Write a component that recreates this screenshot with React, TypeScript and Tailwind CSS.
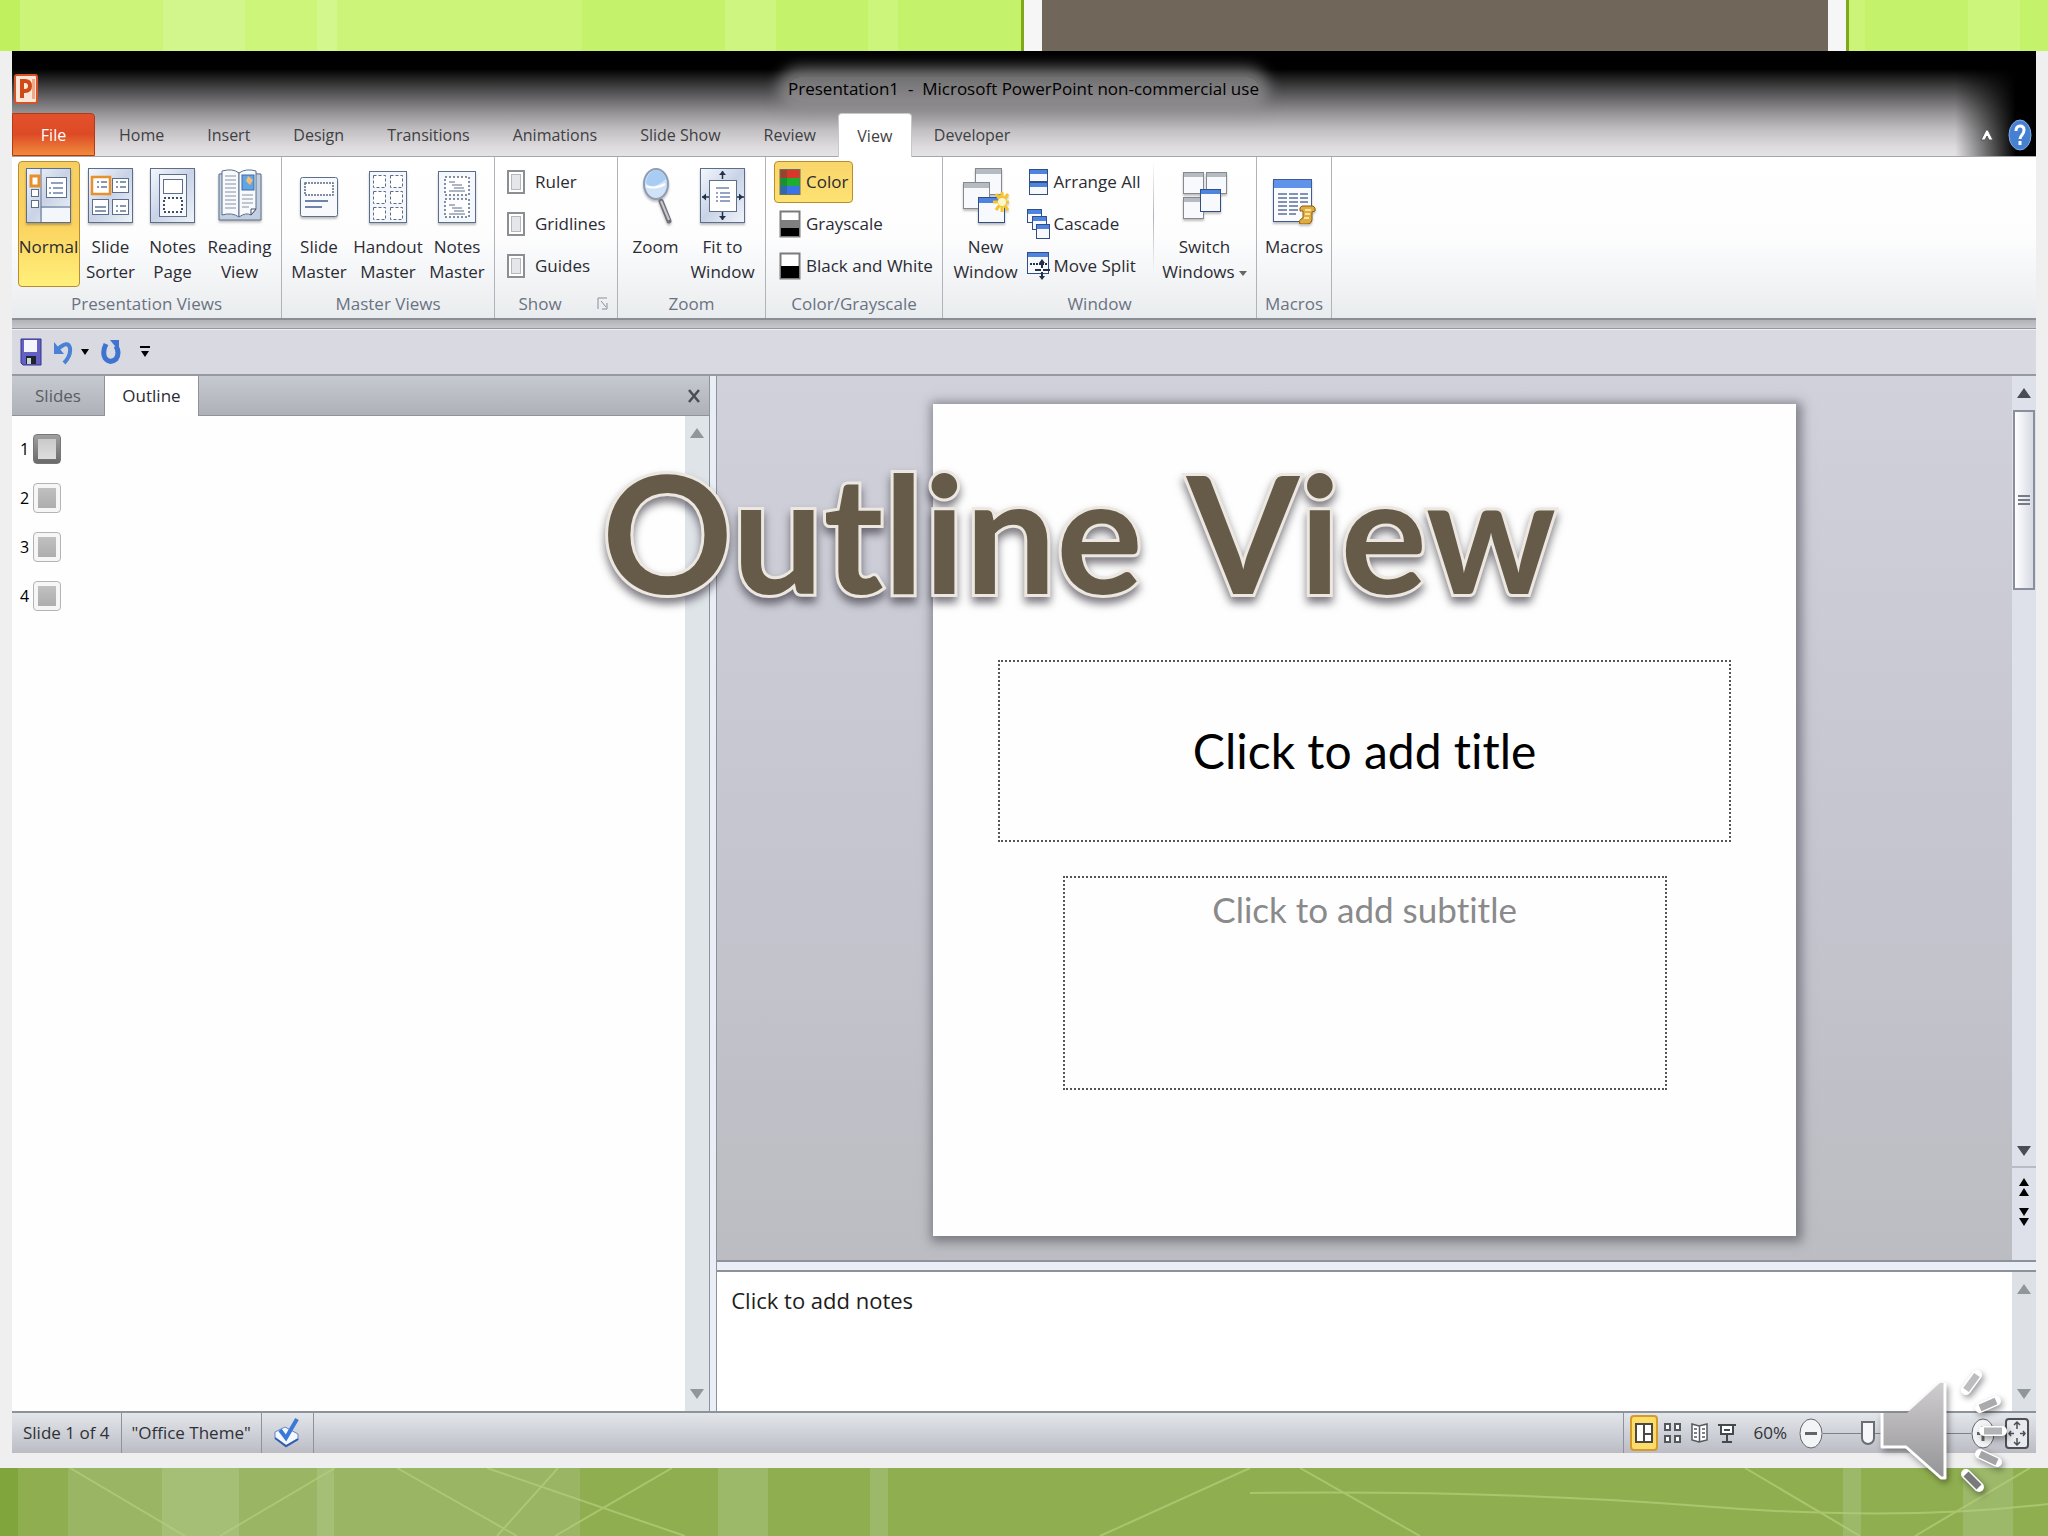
import type { ReactNode } from "react"
import clsx from "clsx"

const LINE = "#5b6f8c"

function Frame({ x, y, w, h, fill = "#fff", stroke = LINE }: { x: number; y: number; w: number; h: number; fill?: string; stroke?: string }) {
  return <rect x={x + 0.5} y={y + 0.5} width={w} height={h} fill={fill} stroke={stroke} />
}

function Dotted({ x, y, w, h }: { x: number; y: number; w: number; h: number }) {
  return <rect x={x} y={y} width={w} height={h} fill="#fff" stroke="#3f4d66" strokeWidth="2" strokeDasharray="2 2" />
}

function BigIcon({ children }: { children: ReactNode }) {
  return (
    <svg width="46" height="56" viewBox="0 0 46 56" fill="none" className="drop-shadow-[0_2px_1px_rgba(0,0,0,0.25)]" aria-hidden="true">
      <defs>
        <linearGradient id="pane" x1="0" y1="0" x2="1" y2="1">
          <stop offset="0" stopColor="#f4f7fc" />
          <stop offset="0.5" stopColor="#c9d3e6" />
          <stop offset="1" stopColor="#f0f4fa" />
        </linearGradient>
      </defs>
      {children}
    </svg>
  )
}

function NormalIcon() {
  return (
    <BigIcon>
      <Frame x={0} y={0} w={44} h={54} fill="url(#pane)" />
      <path d="M15 0v54M15 39h30" stroke={LINE} />
      <path d="M16 40h28v14h-28z" fill="#f3f6fb" />
      <rect x="5" y="8" width="8" height="10" fill="#fff" stroke="#e8902c" strokeWidth="3" />
      <Frame x={5} y={21} w={7} h={7} />
      <Frame x={5} y={32} w={7} h={7} />
      <Frame x={20} y={9} w={20} h={20} />
      <path d="M25 15h12M27 20h10M27 25h10" stroke="#6d83a8" strokeWidth="1.5" />
      <path d="M23 20h2M23 25h2" stroke="#6d83a8" strokeWidth="1.5" />
    </BigIcon>
  )
}

function SorterIcon() {
  return (
    <BigIcon>
      <Frame x={0} y={0} w={44} h={54} fill="url(#pane)" />
      <Frame x={24} y={10} w={16} h={14} />
      <Frame x={4} y={31} w={16} h={15} />
      <Frame x={24} y={31} w={16} h={15} />
      <rect x="4" y="9" width="18" height="17" fill="#fff" stroke="#e8902c" strokeWidth="2.5" />
      <path d="M9 14h2m2 0h6M9 19h2m2 0h6M28 14h2m2 0h6M28 19h2m2 0h6M7 39h11M7 43h11M28 38h2m2 0h6M28 43h2m2 0h6" stroke="#5f7699" strokeWidth="1.5" />
    </BigIcon>
  )
}

function NotesPageIcon() {
  return (
    <BigIcon>
      <Frame x={0} y={0} w={44} h={54} fill="url(#pane)" />
      <Frame x={9} y={6} w={27} h={42} fill="#f6f8fc" />
      <Frame x={13} y={11} w={19} h={14} />
      <Dotted x={14} y={30} w={18} h={14} />
    </BigIcon>
  )
}

function ReadingIcon() {
  return (
    <BigIcon>
      <path d="M2 6L21 5L44 6V52H2Z" fill="#c3cfe0" stroke={LINE} />
      <path d="M5 3Q16 0 22 5V49Q15 44 5 47Z" fill="#f7f9fc" stroke={LINE} />
      <path d="M39 3Q29 0 22 5V49Q29 44 34 47L39 41Z" fill="#f7f9fc" stroke={LINE} />
      <path d="M34 47V41H39Z" fill="#fff" stroke="#3f4d66" />
      <path d="M8 8h11M8 12h11M8 16h11M8 20h11M8 24h11M8 28h11M8 32h11M8 36h11M8 40h11M25 27h11M25 31h11M25 35h11M25 39h7" stroke="#8592a6" />
      <rect x="25" y="7" width="12" height="15" fill="#62a5e6" stroke="#3d6ca5" />
      <path d="M31 8l5 4-3 5-4-4z" fill="#f5bd72" />
    </BigIcon>
  )
}

function SlideMasterIcon() {
  return (
    <BigIcon>
      <rect x="4.5" y="9.5" width="37" height="39" rx="2" fill="#f7f9fc" stroke={LINE} />
      <rect x="9" y="15" width="28" height="12" fill="#fff" stroke="#5c6b86" strokeWidth="1.500" strokeDasharray="2 1" />
      <path d="M9 33h23M9 39h17" stroke="#6d83a8" strokeWidth="2" />
    </BigIcon>
  )
}

function HandoutIcon() {
  return (
    <BigIcon>
      <Frame x={4} y={3} w={37} h={51} fill="#f4f7fb" />
      {[7, 23, 39].map((y) => (
        <path key={y} d={`M8.500 ${y}.5h12v12h-12zM25.500 ${y}.5h12v12h-12z`} fill="#fff" stroke="#5c6b86" strokeDasharray="3 2" />
      ))}
    </BigIcon>
  )
}

function NotesMasterIcon() {
  return (
    <BigIcon>
      <Frame x={4} y={3} w={37} h={51} fill="#f4f7fb" />
      <path d="M11 9h24v18H11zM11 31h24v18H11z" fill="#fff" stroke="#5c6b86" strokeWidth="1.500" strokeDasharray="2 2" />
      <path d="M15 14h6M18 17h10M20 20h10M15 23h16M15 37h6M18 40h10M20 43h10M15 46h16" stroke="#5c6b86" />
    </BigIcon>
  )
}

function ZoomIcon() {
  return (
    <BigIcon>
      <path d="M28 33L36 53" stroke="#6f6f75" strokeWidth="5" strokeLinecap="round" />
      <path d="M28 33L36 52" stroke="#c9c9cf" strokeWidth="2" />
      <ellipse cx="23" cy="16" rx="12" ry="15" fill="#cfe2f7" stroke="#8d9db3" strokeWidth="2" />
      <path d="M13 15q6 8 20-4q-2-8-10-9q-9 2-10 13z" fill="#a9ccf2" />
      <path d="M13 18q8 4 19-2" stroke="#fff" strokeWidth="2" />
    </BigIcon>
  )
}

function FitIcon() {
  return (
    <BigIcon>
      <Frame x={0} y={0} w={44} h={54} fill="url(#pane)" />
      <Frame x={9} y={12} w={27} h={31} />
      <path d="M22.500 3v8M22.500 44v8M2 29h7M37 29h7" stroke="#22304a" strokeWidth="1.5" />
      <path d="M19 7l3.500-4l3.500 4zM19 48l3.500 4l3.500-4zM6 25.500l-4 3.500l4 3.500zM39 25.500l4 3.500l-4 3.500z" fill="#22304a" />
      <path d="M16 20h13M16 25h2m2 0h10M16 29h2m2 0h10M16 33h2m2 0h10" stroke="#7385b5" strokeWidth="1.500" />
    </BigIcon>
  )
}

function WindowGlyph({ x, y, w, h, blue }: { x: number; y: number; w: number; h: number; blue?: boolean }) {
  return (
    <g>
      <rect x={x + 0.5} y={y + 0.5} width={w} height={h} fill="#f7f9fc" stroke={blue ? "#2f4f86" : "#85898f"} />
      <rect x={x + 1} y={y + 1} width={w - 1} height={Math.max(4, Math.round(h / 5))} fill={blue ? "#4f83e0" : "#b6bac1"} />
    </g>
  )
}

function NewWindowIcon() {
  return (
    <BigIcon>
      <WindowGlyph x={12} y={0} w={26} h={26} />
      <WindowGlyph x={0} y={14} w={26} h={26} />
      <WindowGlyph x={15} y={29} w={26} h={25} blue />
      <path d="M39 24v20M30 34h16M33 26l12 16M45 26L33 42" stroke="#f7c52b" strokeWidth="3" />
      <circle cx="39" cy="34" r="4" fill="#fff7c8" />
    </BigIcon>
  )
}

function SwitchIcon() {
  return (
    <BigIcon>
      <WindowGlyph x={1} y={4} w={20} h={21} />
      <WindowGlyph x={24} y={4} w={20} h={21} />
      <WindowGlyph x={1} y={29} w={20} h={21} />
      <WindowGlyph x={18} y={21} w={20} h={22} blue />
    </BigIcon>
  )
}

function MacrosIcon() {
  return (
    <BigIcon>
      <Frame x={2} y={11} w={38} h={42} fill="#f9fbfe" stroke="#3f5d90" />
      <rect x="3" y="12" width="37" height="8" fill="#5f93ea" />
      <path d="M7 26h9M7 30h9M7 34h9M7 38h9M7 42h9M7 46h9M18 26h9M18 30h9M18 34h9M18 38h9M18 42h9M29 26h8M29 30h8M29 34h8M18 46h7" stroke="#8292b0" strokeWidth="2" />
      <path d="M31 38h11q3 1 2 5l-3 1v8q-1 4-4 4h-8q-2-3 1-5l2-1v-7h-3q-1-4 2-5z" fill="#e0ac3f" stroke="#8a5f12" />
      <path d="M34 42h6M34 46h5M33 50h5" stroke="#fbe3a0" strokeWidth="2" />
    </BigIcon>
  )
}

function SmallIcon({ children }: { children: ReactNode }) {
  return (
    <svg width="23" height="30" viewBox="0 0 23 30" fill="none" aria-hidden="true">
      {children}
    </svg>
  )
}

const colorIcon = (
  <SmallIcon>
    <path d="M1 3h20v8H1z" fill="#d8382c" />
    <path d="M1 11h20v8H1z" fill="#1cae2c" />
    <path d="M1 19h20v8H1z" fill="#3a72e8" />
    <path d="M1 3h7v24H1z" fill="#1e5a3a" opacity="0.35" />
    <rect x="1" y="2.500" width="20" height="25" stroke="#6d6d60" />
  </SmallIcon>
)

const grayscaleIcon = (
  <SmallIcon>
    <rect x="1.500" y="2.500" width="19" height="25" fill="#fff" stroke="#7b7b7b" strokeWidth="2" />
    <path d="M2 11h18v8H2z" fill="#7f7f7f" />
    <path d="M2 19h18v8H2z" fill="#000" />
  </SmallIcon>
)

const blackWhiteIcon = (
  <SmallIcon>
    <rect x="1.500" y="2.500" width="19" height="25" fill="#fff" stroke="#7b7b7b" strokeWidth="2" />
    <path d="M2 15h18v12H2z" fill="#000" />
  </SmallIcon>
)

const arrangeIcon = (
  <SmallIcon>
    <WindowGlyph x={2} y={2} w={18} h={12} blue />
    <WindowGlyph x={2} y={15} w={18} h={12} blue />
  </SmallIcon>
)

const cascadeIcon = (
  <SmallIcon>
    <WindowGlyph x={0} y={0} w={14} h={13} blue />
    <WindowGlyph x={5} y={7} w={14} h={13} blue />
    <WindowGlyph x={9} y={15} w={13} h={14} blue />
  </SmallIcon>
)

const splitIcon = (
  <SmallIcon>
    <WindowGlyph x={0} y={1} w={21} h={21} blue />
    <path d="M3 13h17" stroke="#22304a" strokeWidth="2" strokeDasharray="2 1" />
    <path d="M15 10v7M15 21v6M8 19h6M16 19h7" stroke="#22304a" strokeWidth="2" />
    <path d="M12 12l3-4l3 4zM12 25l3 4l3-4z" fill="#22304a" />
  </SmallIcon>
)

function LargeButton({ icon, lines, width, active, menu }: { icon: ReactNode; lines: string[]; width: string; active?: boolean; menu?: boolean }) {
  return (
    <button
      type="button"
      aria-pressed={active}
      className={clsx(
        "flex h-[126px] flex-col items-center gap-2.5 rounded border pt-1.5 leading-[25px] whitespace-nowrap",
        width,
        active ? "border-[#b98d2c] bg-linear-to-b from-[#f6cf63] via-[#fbd25f] to-[#fff07a]" : "border-transparent"
      )}
    >
      {icon}
      <span>
        {lines.map((line, i) => (
          <span key={line} className="block">
            {line}
            {menu && i === lines.length - 1 && <span className="ml-1 inline-block border-x-4 border-t-5 border-x-transparent border-t-[#666] align-middle" />}
          </span>
        ))}
      </span>
    </button>
  )
}

function SmallButton({ icon, label, active }: { icon: ReactNode; label: string; active?: boolean }) {
  return (
    <button
      type="button"
      aria-pressed={active}
      className={clsx(
        "flex h-[42px] items-center gap-1 rounded border px-1 whitespace-nowrap",
        active ? "border-[#b98d2c] bg-linear-to-b from-[#f9d56b] to-[#fde272]" : "border-transparent"
      )}
    >
      {icon}
      {label}
    </button>
  )
}

function Group({ title, width, launcher, children }: { title: string; width: string; launcher?: boolean; children: ReactNode }) {
  return (
    <section aria-label={title} className={clsx("flex flex-col border-r border-[#b0b4ba] pt-1", width)}>
      <div className="flex flex-1 items-start justify-center">{children}</div>
      <div className="flex h-7 items-center px-1 text-[#6a7282]">
        <h2 className={clsx("flex-1 text-center", launcher && "-mr-3 pr-7")}>{title}</h2>
        {launcher && (
          <button type="button" aria-label="More show options" className="mr-1">
            <svg width="12" height="14" viewBox="0 0 12 14" fill="none" stroke="#8a8f99" aria-hidden="true">
              <path d="M1 12V1h9M4 4l5 6M10 6v6H5" />
            </svg>
          </button>
        )}
      </div>
    </section>
  )
}

const TABS_BEFORE = ["Home", "Insert", "Design", "Transitions", "Animations", "Slide Show", "Review"]

function Arrow({ down, dark }: { down?: boolean; dark?: boolean }) {
  return (
    <svg width="14" height="10" viewBox="0 0 14 10" className={dark ? "fill-[#474c55]" : "fill-[#8f979c]"} aria-hidden="true">
      <path d={down ? "M0 0h14L7 10z" : "M0 10h14L7 0z"} />
    </svg>
  )
}

function Header() {
  return (
    <header className="bg-[linear-gradient(to_left,#000_0,#000_1%,transparent_4%),linear-gradient(to_bottom,#000_0,#000_17%,#3a3a3b_32%,#6c6a6c_46%,#9a989a_60%,#c2c0c2_75%,#dcdadd_90%,#e6e4e7_100%)]">
      <div className="flex h-[62px] items-center pt-3.5">
        <svg width="25" height="30" viewBox="0 0 25 30" className="ml-0.5" aria-hidden="true">
          <rect x="1" y="1" width="22" height="28" rx="2" fill="#fbe6d8" stroke="#d2552a" strokeWidth="2" />
          <path d="M18 5h3v20h-3z" fill="#f3a887" />
          <path d="M8 24V7h3q5 0 5 5t-5 5h-2" fill="none" stroke="#cf4a16" strokeWidth="4" />
        </svg>
        <h1 className="flex flex-1 justify-center pr-1 leading-6 whitespace-pre text-black">
          <span className="rounded-full bg-[#969496]/70 shadow-[0_0_14px_10px_rgba(150,148,150,0.7)]">{"Presentation1  -  Microsoft PowerPoint non-commercial use"}</span>
        </h1>
        <span className="w-6" />
      </div>
      <nav className="flex h-11 items-stretch gap-px border-b border-[#a5a5aa] text-[16px] text-[#3f3f44]" aria-label="Ribbon tabs">
        <button type="button" className="mr-0.5 w-[83px] rounded-tr border border-[#b23a15] bg-linear-to-b from-[#e2502c] via-[#dd4a26] to-[#f08a3c] text-white">
          File
        </button>
        {TABS_BEFORE.map((tab) => (
          <button key={tab} type="button" className="px-[21px]">
            {tab}
          </button>
        ))}
        <button type="button" aria-current="page" className="-mb-px w-[74px] rounded-t border border-b-0 border-[#c8c8cc] bg-white">
          View
        </button>
        <button type="button" className="px-[21px]">
          Developer
        </button>
        <div className="mr-1 ml-auto flex items-center gap-3.5">
          <button type="button" aria-label="Minimize the ribbon">
            <svg width="14" height="14" viewBox="0 0 14 14" aria-hidden="true">
              <path d="M1 12L6 2h2l5 10H9L7 8l-2 4z" fill="#fff" stroke="#555" />
            </svg>
          </button>
          <button type="button" aria-label="Help">
            <svg width="24" height="32" viewBox="0 0 24 32" aria-hidden="true">
              <ellipse cx="12" cy="16" rx="11" ry="15" fill="#4580d2" stroke="#7fb0ec" />
              <path d="M8 12q0-5 4-5t4 4q0 3-2 5t-2 4" fill="none" stroke="#fff" strokeWidth="3" />
              <path d="M10.500 22h3v4h-3z" fill="#fff" />
            </svg>
          </button>
        </div>
      </nav>
    </header>
  )
}

function Ribbon() {
  return (
    <div className="flex h-[163px] border-b-2 border-[#8b8e95] bg-linear-to-b from-white via-[#fdfdfe] to-[#e9ecee] text-[#2b2b33]">
      <Group title="Presentation Views" width="w-[270px]">
        <LargeButton icon={<NormalIcon />} lines={["Normal"]} width="w-[62px]" active />
        <LargeButton icon={<SorterIcon />} lines={["Slide", "Sorter"]} width="w-[62px]" />
        <LargeButton icon={<NotesPageIcon />} lines={["Notes", "Page"]} width="w-[62px]" />
        <LargeButton icon={<ReadingIcon />} lines={["Reading", "View"]} width="w-[72px]" />
      </Group>
      <Group title="Master Views" width="w-[213px]">
        <LargeButton icon={<SlideMasterIcon />} lines={["Slide", "Master"]} width="w-[68px]" />
        <LargeButton icon={<HandoutIcon />} lines={["Handout", "Master"]} width="w-[70px]" />
        <LargeButton icon={<NotesMasterIcon />} lines={["Notes", "Master"]} width="w-[68px]" />
      </Group>
      <Group title="Show" width="w-[123px]" launcher>
        <div className="w-full pl-3">
          {["Ruler", "Gridlines", "Guides"].map((label) => (
            <label key={label} className="flex h-[42px] items-center gap-2.5">
              <input type="checkbox" className="h-6 w-[18px] appearance-none border-2 border-[#8b8e93] bg-[#e4e6e9] shadow-[inset_0_0_0_2px_#fff,inset_0_0_0_3px_#b5b8bd]" />
              {label}
            </label>
          ))}
        </div>
      </Group>
      <Group title="Zoom" width="w-[148px]">
        <LargeButton icon={<ZoomIcon />} lines={["Zoom"]} width="w-[62px]" />
        <LargeButton icon={<FitIcon />} lines={["Fit to", "Window"]} width="w-[72px]" />
      </Group>
      <Group title="Color/Grayscale" width="w-[177px]">
        <div className="flex w-full flex-col items-start pl-2">
          <SmallButton icon={colorIcon} label="Color" active />
          <SmallButton icon={grayscaleIcon} label="Grayscale" />
          <SmallButton icon={blackWhiteIcon} label="Black and White" />
        </div>
      </Group>
      <Group title="Window" width="w-[314px]">
        <LargeButton icon={<NewWindowIcon />} lines={["New", "Window"]} width="ml-1.5 w-[72px]" />
        <div className="flex w-[131px] flex-col items-start">
          <SmallButton icon={arrangeIcon} label="Arrange All" />
          <SmallButton icon={cascadeIcon} label="Cascade" />
          <SmallButton icon={splitIcon} label="Move Split" />
        </div>
        <div className="h-28 w-px bg-linear-to-b from-transparent via-[#b0b4ba] to-transparent" />
        <LargeButton icon={<SwitchIcon />} lines={["Switch", "Windows"]} width="w-[102px]" menu />
      </Group>
      <Group title="Macros" width="w-[75px]">
        <LargeButton icon={<MacrosIcon />} lines={["Macros"]} width="w-[72px]" />
      </Group>
    </div>
  )
}

function QuickAccess() {
  return (
    <div className="flex h-[47px] items-center border-t border-b-2 border-t-[#eef0f4] border-b-[#979aa2] bg-[#d8d9e1] pl-2">
      <button type="button" aria-label="Save">
        <svg width="22" height="28" viewBox="0 0 22 28" aria-hidden="true">
          <path d="M1 1h20v26H3l-2-2z" fill="#6461c4" stroke="#34328a" />
          <path d="M4 2h13v12H4z" fill="#f4f6ff" />
          <path d="M6 18h10v8H6z" fill="#1f2430" />
          <path d="M7 20h4v6H7z" fill="#c6d6d0" />
        </svg>
      </button>
      <button type="button" aria-label="Undo" className="ml-3 flex items-center gap-2">
        <svg width="19" height="26" viewBox="0 0 19 26" fill="none" aria-hidden="true">
          <path d="M4 10q10-9 12-1q1 8-6 15" stroke="#4a80d6" strokeWidth="4" />
          <path d="M0 3v12h10z" fill="#4a80d6" />
        </svg>
        <svg width="8" height="6" viewBox="0 0 8 6" aria-hidden="true">
          <path d="M0 0h8L4 6z" />
        </svg>
      </button>
      <button type="button" aria-label="Repeat" className="ml-3">
        <svg width="20" height="26" viewBox="0 0 20 26" fill="none" aria-hidden="true">
          <path d="M5 5q-4 8-1 14q5 6 11 1q4-6 0-13" stroke="#3e74cf" strokeWidth="5" />
          <path d="M9 1h9v11z" fill="#3e74cf" />
        </svg>
      </button>
      <button type="button" aria-label="Customize Quick Access Toolbar" className="ml-[18px]">
        <svg width="12" height="12" viewBox="0 0 12 12" aria-hidden="true">
          <path d="M1 0h10v2H1zM2 5h8l-4 6z" />
        </svg>
      </button>
    </div>
  )
}

function OutlinePane() {
  return (
    <aside className="flex w-[34.500%] flex-col border-r border-[#8e929a]">
      <div className="flex h-10 items-stretch border-b border-[#8e929a] bg-linear-to-b from-[#c6c9cf] to-[#aeb1b8]" role="tablist">
        <button type="button" role="tab" className="w-[93px] border-r border-[#8e929a] text-[#5a5d63]">
          Slides
        </button>
        <button type="button" role="tab" aria-selected="true" className="-mb-px w-[94px] border-r border-[#8e929a] bg-white text-[#2b2b33]">
          Outline
        </button>
        <button type="button" aria-label="Close" className="mr-2 ml-auto">
          <svg width="14" height="16" viewBox="0 0 14 16" stroke="#4a4d53" strokeWidth="2.500" aria-hidden="true">
            <path d="M2 2l10 12M12 2L2 14" />
          </svg>
        </button>
      </div>
      <div className="flex flex-1 bg-[#fefefe]">
        <ol className="flex-1 pt-2 pl-2">
          {[1, 2, 3, 4].map((n) => (
            <li key={n}>
              <button type="button" className="flex h-[49px] items-center gap-1 text-[16px] text-black">
                {n}
                <span
                  className={clsx(
                    "block h-[30px] w-7 rounded-sm border p-1",
                    n === 1 ? "border-[#777] bg-linear-to-b from-[#a0a0a0] to-[#6a6a6a]" : "border-[#b4b4b4] bg-[#f6f6f6]"
                  )}
                >
                  <span className={clsx("block h-full bg-linear-to-b", n === 1 ? "from-[#cacaca] to-[#dedede]" : "from-[#c0c0c0] to-[#adadad]")} />
                </span>
              </button>
            </li>
          ))}
        </ol>
        <div className="flex w-6 flex-col items-center justify-between bg-[#dfe4e9] py-3">
          <Arrow />
          <Arrow down />
        </div>
      </div>
    </aside>
  )
}

function SlideEditor() {
  return (
    <main className="flex min-w-0 flex-1 flex-col border-l border-[#8e929a]">
      <div className="flex flex-1 border-b-2 border-[#8e929a] bg-linear-to-b from-[#d0d1da] via-[#c5c6d0] to-[#bcbdc2]">
        <div className="flex flex-1 justify-center pt-7 pb-6">
          <div className="flex w-2/3 flex-col items-center gap-[34px] bg-[#fefefe] pt-64 font-['Lato',sans-serif] shadow-[2px_2px_10px_4px_rgba(70,70,80,0.55)] [font-variant-ligatures:none]">
            <div className="flex h-[182px] w-[85%] items-center justify-center border-2 border-dotted border-[#555] text-[48px] leading-none text-black">
              Click to add title
            </div>
            <div className="h-[214px] w-[70%] border-2 border-dotted border-[#555] pt-1.5 text-center text-[35px] leading-[50px] text-[#8a8a8a]">Click to add subtitle</div>
          </div>
        </div>
        <div className="flex w-6 flex-col items-center bg-[#dfe1ea] pt-3">
          <Arrow dark />
          <div className="mt-3 flex h-[180px] w-[22px] flex-col items-center justify-center gap-0.5 border-2 border-[#8b8f9c] bg-linear-to-r from-white to-[#d8dae4]">
            <span className="h-0.5 w-3 bg-[#777b86]" />
            <span className="h-0.5 w-3 bg-[#777b86]" />
            <span className="h-0.5 w-3 bg-[#777b86]" />
          </div>
          <div className="mt-auto mb-2.5">
            <Arrow down dark />
          </div>
          <div className="flex h-[94px] w-full flex-col items-center gap-3 border-t-2 border-[#b9bbc6] pt-2.5">
            <button type="button" aria-label="Previous slide">
              <svg width="10" height="18" viewBox="0 0 10 18" aria-hidden="true">
                <path d="M0 8h10L5 0zM0 18h10L5 10z" />
              </svg>
            </button>
            <button type="button" aria-label="Next slide">
              <svg width="10" height="18" viewBox="0 0 10 18" aria-hidden="true">
                <path d="M0 0h10L5 8zM0 10h10l-5 8z" />
              </svg>
            </button>
          </div>
        </div>
      </div>
      <div className="h-2 bg-[#eaeef6]" />
      <div className="flex h-[141px] border-t-2 border-[#8e929a] bg-white">
        <p className="flex-1 px-3.5 pt-3 text-[22px] leading-8 text-[#1c1c1c]">Click to add notes</p>
        <div className="flex w-6 flex-col items-center justify-between bg-[#dde1e5] py-3">
          <Arrow />
          <Arrow down />
        </div>
      </div>
    </main>
  )
}

function StatusBar() {
  return (
    <footer className="flex h-[42px] items-stretch border-t-2 border-[#8e929a] bg-linear-to-b from-[#e3e6ea] via-[#cfd1d8] to-[#bbbcc4] text-[#2f3136]">
      <span className="flex items-center border-r border-[#8e929a] px-[11px]">Slide 1 of 4</span>
      <span className="flex items-center border-r border-[#8e929a] px-2.5">"Office Theme"</span>
      <button type="button" aria-label="Spelling" className="w-[52px] border-r border-[#8e929a] pl-3">
        <svg width="26" height="30" viewBox="0 0 26 30" fill="none" aria-hidden="true">
          <path d="M1 14l10-5 13 7v6l-12 7L1 20z" fill="#f5f8ff" stroke="#5f86c4" />
          <path d="M1 20l11 8 12-7" stroke="#2f5db0" strokeWidth="2" />
          <path d="M6 12l6 8L23 1" stroke="#3b78d8" strokeWidth="4" />
        </svg>
      </button>
      <div className="ml-auto flex items-center border-l border-[#8e929a] pr-[7px] pl-1.5">
        <button type="button" aria-label="Normal view" className="flex h-9 w-7 items-center justify-center rounded border-2 border-[#d39a2e] bg-[#fddc6a]">
          <svg width="18" height="20" viewBox="0 0 18 20" fill="#fff" stroke="#4c4a40" strokeWidth="2" aria-hidden="true">
            <path d="M1 1h16v18H1zM9 1v18M9 11h8" />
          </svg>
        </button>
        <button type="button" aria-label="Slide sorter" className="ml-1.5">
          <svg width="17" height="20" viewBox="0 0 17 20" fill="#fff" stroke="#55585f" strokeWidth="2" aria-hidden="true">
            <path d="M1 1h5v6H1zM11 1h5v6h-5zM1 13h5v6H1zM11 13h5v6h-5z" />
          </svg>
        </button>
        <button type="button" aria-label="Reading view" className="ml-2.5">
          <svg width="17" height="20" viewBox="0 0 17 20" fill="#fff" stroke="#55585f" strokeWidth="1.500" aria-hidden="true">
            <path d="M1 1l7 2 8-2v16l-8 2-7-2zM8.500 3v16M3 6h3M3 10h3M3 14h3M11 6h3M11 10h3M11 14h3" />
          </svg>
        </button>
        <button type="button" aria-label="Slide show" className="ml-2.5">
          <svg width="18" height="20" viewBox="0 0 18 20" fill="#fff" stroke="#45484f" strokeWidth="2" aria-hidden="true">
            <path d="M0 2h18M3 3v8h12V3M9 11v7M4 19h10M6 7h6" />
          </svg>
        </button>
        <span className="ml-[18px]">60%</span>
        <button type="button" aria-label="Zoom out" className="ml-3">
          <svg width="24" height="31" viewBox="0 0 24 31" fill="#f3f4f6" stroke="#62656c" aria-hidden="true">
            <ellipse cx="12" cy="15.500" rx="11" ry="14.500" />
            <path d="M6 15.500h12" strokeWidth="3" />
          </svg>
        </button>
        <input
          type="range"
          aria-label="Zoom"
          defaultValue={28}
          className="h-8 w-[148px] appearance-none bg-[linear-gradient(#7c8087,#7c8087)] bg-[length:100%_1px] bg-center bg-no-repeat [&::-webkit-slider-thumb]:h-6 [&::-webkit-slider-thumb]:w-3.5 [&::-webkit-slider-thumb]:appearance-none [&::-webkit-slider-thumb]:rounded-b-full [&::-webkit-slider-thumb]:border-2 [&::-webkit-slider-thumb]:border-[#6a6d74] [&::-webkit-slider-thumb]:bg-[#f6f7f9]"
        />
        <button type="button" aria-label="Zoom in">
          <svg width="24" height="31" viewBox="0 0 24 31" fill="#f3f4f6" stroke="#62656c" aria-hidden="true">
            <ellipse cx="12" cy="15.500" rx="11" ry="14.500" />
            <path d="M6 15.500h12M12 8v15" strokeWidth="3" />
          </svg>
        </button>
        <button type="button" aria-label="Fit slide to window" className="ml-2.5">
          <svg width="24" height="31" viewBox="0 0 24 31" fill="#e9eaee" stroke="#4c4f56" strokeWidth="2" aria-hidden="true">
            <rect x="1" y="1" width="22" height="29" rx="3" />
            <path d="M12 4v7M12 20v7M4 15.500h5M15 15.500h5M9 7l3-3 3 3M9 24l3 3 3-3M6 13l-2 2.500 2 2.500M18 13l2 2.500-2 2.500" fill="none" strokeWidth="1.500" />
          </svg>
        </button>
      </div>
    </footer>
  )
}

const SOUND_DASHES = [
  { d: "M88 22L99 7", tone: "#bdbdc0" },
  { d: "M102 40L118 33", tone: "#aaaaad" },
  { d: "M106 63H124", tone: "#b3b3b6" },
  { d: "M102 86L119 94", tone: "#a4a4a7" },
  { d: "M88 106L101 119", tone: "#77797a" },
]

function SpeakerIcon() {
  return (
    <svg width="130" height="126" viewBox="0 0 130 126" fill="none" className="absolute right-10 bottom-[42px] drop-shadow-[2px_3px_3px_rgba(0,0,0,0.4)]" aria-hidden="true">
      <defs>
        <linearGradient id="cone" x1="0" y1="0" x2="0" y2="1">
          <stop offset="0" stopColor="#cfcdd0" />
          <stop offset="1" stopColor="#949396" />
        </linearGradient>
      </defs>
      <path d="M4 45H29L62 15H67V110H63L28 79H4Z" fill="url(#cone)" />
      <path d="M4 45V79H28L63 110H67V15" stroke="#fff" strokeWidth="3" strokeLinejoin="round" />
      {SOUND_DASHES.map(({ d, tone }) => (
        <g key={d}>
          <path d={d} stroke="#fff" strokeWidth="10" strokeLinecap="round" />
          <path d={d} stroke={tone} strokeWidth="7" />
        </g>
      ))}
    </svg>
  )
}

const TOP_STRIPES = "bg-[linear-gradient(to_right,#c1f05f_0,#c1f05f_2%,#cbf478_2%,#cbf478_16%,#d2f58c_16%,#d2f58c_24%,#ccf57a_24%,#ccf57a_31%,#d3f78c_31%,#d3f78c_33%,#cbf478_33%,#cbf478_57%,#c5f26b_57%,#c5f26b_71%,#cdf57f_71%,#cdf57f_76%,#c5f26b_76%,#c5f26b_85%,#ccf57c_85%,#ccf57c_88%,#c5f26b_88%)]"

function BottomBand() {
  return (
    <svg viewBox="0 0 2048 68" preserveAspectRatio="none" className="block h-[68px] w-full bg-[#8fae50]" aria-hidden="true">
      <path d="M0 0h18v68H0z" fill="#80a53c" />
      <path d="M68 0h512v68H68z" fill="#9ab564" />
      <path d="M162 0h77v68h-77zM317 0h17v68h-17z" fill="#a5bf76" />
      <path d="M718 0h50v68h-50zM870 0h18v68h-18zM1843 0h18v68h-18zM1963 0h50v68h-50z" fill="#9cb869" />
      <g fill="none" stroke="#b4d07c" strokeWidth="2" opacity="0.7">
        <path d="M70 0L185 68M335 0L220 68M397 0L517 68M487 0L685 68M558 0L497 68M672 0L555 68" />
        <path d="M1100 68L1250 0M1300 0L1420 68M1745 0L1860 68M1915 68L2030 0" />
        <path d="M1250 25Q1500 22 1700 38T2048 36" />
      </g>
    </svg>
  )
}

export default function App() {
  return (
    <div className="relative flex min-h-screen flex-col bg-[#efefef] font-['Open_Sans',sans-serif] text-[17px]">
      <div className="flex h-[51px] gap-[18px] bg-[#f5f6f5]">
        <div className={clsx("w-1/2 border-r-3 border-[#7fa81a]", TOP_STRIPES)} />
        <div className="w-[38.400%] bg-[#71665a]" />
        <div className="flex-1 border-l-3 border-[#7fa81a] bg-[linear-gradient(to_right,#cbf478_0,#cbf478_8%,#c5f26b_8%,#c5f26b_60%,#ccf57c_60%,#ccf57c_86%,#c5f26b_86%)]" />
      </div>
      <div className="mx-3 mb-[15px] flex flex-1 flex-col">
        <Header />
        <Ribbon />
        <div className="h-[9px] border-b border-[#94979e] bg-linear-to-b from-[#b1b3b8] to-[#c6c8cc]" />
        <QuickAccess />
        <div className="flex flex-1 gap-1.5 bg-[#eaeef6]">
          <OutlinePane />
          <SlideEditor />
        </div>
        <StatusBar />
      </div>
      <BottomBand />
      <div className="pointer-events-none absolute inset-x-0 top-[436px] flex justify-center gap-11 pl-[110px] font-['Lato',sans-serif] text-[162px] leading-[192px] font-bold text-[#665b49] drop-shadow-[0_6px_4px_rgba(40,35,45,0.6)] [-webkit-text-stroke:6px_#ece7e0] [paint-order:stroke_fill]">
        <span>Outline</span>
        <span>View</span>
      </div>
      <SpeakerIcon />
    </div>
  )
}
